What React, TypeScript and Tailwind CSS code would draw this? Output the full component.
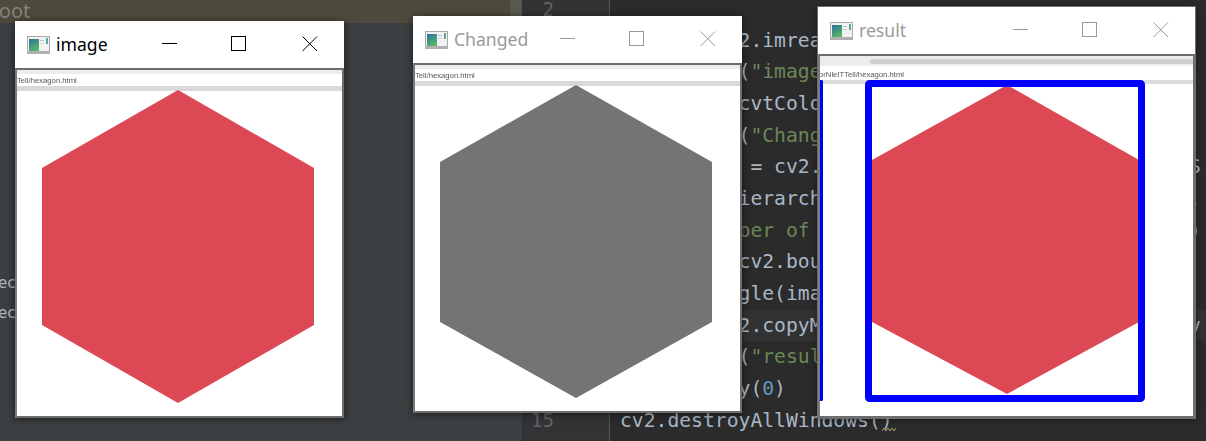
const code: { n: number; parts: [string, string][]; active?: boolean }[] = [
  { n: 2, parts: [] },
  { n: 3, parts: [['t', 'image = cv2.imread('], ['s', '"hexagon.png"'], ['t', ')']] },
  { n: 4, parts: [['t', 'cv2.imshow('], ['s', '"image"'], ['t', ', image)']] },
  { n: 5, parts: [['t', 'gry = cv2.cvtColor(image, cv2.COLOR_BGR2GRAY)']] },
  { n: 6, parts: [['t', 'cv2.imshow('], ['s', '"Changed"'], ['t', ', gry)']] },
  { n: 7, parts: [['t', 'contour, _ = cv2.findContours(gray2, cv2.RETR_LIS']] },
  { n: 8, parts: [['t', 'contour, hierarchy = cv2.findContours(gray2, cv2.']] },
  { n: 9, parts: [['t', 'print('], ['s', '"Number of contours = "'], ['t', ' + str(len(contour))']] },
  { n: 10, parts: [['t', 'x,y,w,h = cv2.boundingRect(contour[0])']] },
  { n: 11, parts: [['t', 'cv2.rectangle(image, (x, y), (x+w, y+h))']] },
  { n: 12, parts: [['t', 'image = cv2.copyMakeBorder(image, 10, 0, 0, 0, cv']], active: true },
  { n: 13, parts: [['t', 'cv2.imshow('], ['s', '"result"'], ['t', ', image)']] },
  { n: 14, parts: [['t', 'cv2.waitKey('], ['n', '0'], ['t', ')']] },
  { n: 15, parts: [['t', 'cv2.destroyAllWindows()']] },
];

function WindowIcon() {
  return (
    <svg width="23" height="18" viewBox="0 0 23 18" className="shrink-0">
      <defs>
        <linearGradient id="ico" x1="0" y1="0" x2="0.5" y2="1">
          <stop offset="0" stopColor="#2f6f9f" />
          <stop offset="1" stopColor="#55b56a" />
        </linearGradient>
      </defs>
      <rect x="0.5" y="0.5" width="22" height="17" fill="#f2f2f2" stroke="#a9a9a9" />
      <rect x="2" y="3" width="10" height="12" fill="url(#ico)" />
      <rect x="13" y="4" width="4" height="1" fill="#b5c4c4" />
      <rect x="13" y="7" width="4" height="1" fill="#c8d2d2" />
      <rect x="19" y="2" width="2" height="6" fill="#5fa59a" />
      <rect x="0" y="15" width="23" height="3" fill="#b0b0b0" />
    </svg>
  );
}

function WindowControls({ color }: { color: string }) {
  return (
    <svg width="156" height="16" viewBox="0 0 156 16" className="shrink-0 mb-[2px]" fill="none" stroke={color}>
      <path d="M0 7.5h15" />
      <rect x="69.5" y="0.5" width="14" height="14" />
      <path d="M140.5 0.5l14.5 14.5M155 0.5l-14.5 14.5" />
    </svg>
  );
}

function Window({
  className,
  title,
  active,
  address,
  controlsGap,
  children,
}: {
  className: string;
  title: string;
  active?: boolean;
  address: React.ReactNode;
  controlsGap: string;
  children: React.ReactNode;
}) {
  return (
    <div className={`absolute flex flex-col bg-white shadow-[0_1px_8px_rgba(0,0,0,0.55)] ${className}`}>
      <div className="flex items-center h-[47px] shrink-0 pl-[12px] bg-white">
        <WindowIcon />
        <span
          className={`ml-[6px] text-[17.6px] font-['Noto_Sans',sans-serif] leading-none ${active ? 'text-black' : 'text-[#9a9a9a]'}`}
        >
          {title}
        </span>
        <div className={controlsGap}></div>
        <WindowControls color={active ? '#000000' : '#999999'} />
      </div>
      <div className="relative flex-1 flex flex-col border-2 border-[#6e6e6e] border-l-[#7a7a7a] overflow-hidden bg-white">
        {address}
        {children}
      </div>
    </div>
  );
}

function BrowserChrome({ text }: { text: string }) {
  return (
    <div className="shrink-0">
      <div className="h-[4px] bg-[#ececec]"></div>
      <div className="h-[12px] bg-white flex items-center pt-[2px]">
        <span className="text-[7.7px] leading-none text-[#555] font-['Liberation_Sans',sans-serif] blur-[0.3px]">{text}</span>
      </div>
      <div className="h-[5px] bg-[#d9d9d9]"></div>
    </div>
  );
}

export default function App() {
  return (
    <div className="relative w-[1206px] h-[441px] overflow-hidden flex bg-[#2b2b2b]">
      {/* project panel */}
      <div className="w-[522px] shrink-0 flex flex-col bg-[#3c3f41] overflow-hidden">
        <div className="h-[23px] shrink-0 flex bg-[#4e4a3d]">
          <div className="w-[510px] overflow-hidden">
            <span className="block -ml-[9px] text-[20px] leading-[22px] text-[#85837a] font-['Noto_Sans',sans-serif]">root</span>
          </div>
          <div className="flex-1 bg-[#5a574e]"></div>
        </div>
        <div className="pt-[248px] flex flex-col gap-[8px] -ml-[9px] text-[17px] leading-[22px] text-[#a9b7c6] font-['Noto_Sans',sans-serif]">
          <span>rec</span>
          <span>rec</span>
        </div>
      </div>

      {/* editor */}
      <div className="flex-1 overflow-hidden">
        <div className="-mt-[7px] flex flex-col font-['DejaVu_Sans_Mono',monospace] text-[19.7px] whitespace-pre">
          {code.map(line => (
            <div key={line.n} className="flex h-[31.67px] shrink-0">
              <div className="w-[88px] shrink-0 bg-[#313335] border-r border-[#555555] flex items-center justify-end pr-[55px] text-[#606366] text-[19px]">
                {line.n}
              </div>
              <div className={`flex-1 flex items-center pl-[10px] ${line.active ? 'bg-[#323232]' : ''}`}>
                {line.parts.map(([kind, text], i) => (
                  <span
                    key={i}
                    className={kind === 's' ? 'text-[#6a8759]' : kind === 'n' ? 'text-[#6897bb]' : 'text-[#a9b7c6]'}
                  >
                    {text}
                  </span>
                ))}
              </div>
            </div>
          ))}
          <div className="h-[40px] flex shrink-0">
            <div className="w-[88px] bg-[#313335] border-r border-[#555555]"></div>
          </div>
        </div>
      </div>

      {/* squiggle under the closing paren */}
      <svg width="14" height="6" viewBox="0 0 14 6" className="absolute left-[882px] top-[427px]" fill="none" stroke="#a89f6a">
        <path d="M0 4l2-3 2 3 2-3 2 3 2-3 2 3 2-3" />
      </svg>

      <Window
        className="left-[15px] top-[21px] w-[329px] h-[397px]"
        title="image"
        active
        controlsGap="ml-[54px]"
        address={<BrowserChrome text="Tell/hexagon.html" />}
      >
        <svg className="absolute left-0 top-0" width="325" height="348" viewBox="17 70 325 348">
          <polygon points="178,90 314,168 314,325 178,403 42,325 42,168" fill="#dc4955" />
        </svg>
      </Window>

      <Window
        className="left-[413px] top-[16px] w-[329px] h-[397px]"
        title="Changed"
        controlsGap="ml-[32px]"
        address={<BrowserChrome text="Tell/hexagon.html" />}
      >
        <svg className="absolute left-0 top-0" width="325" height="348" viewBox="415 65 325 348">
          <polygon points="576,85 712,162 712,322 576,398 440,322 440,162" fill="#747474" />
        </svg>
      </Window>

      <Window
        className="left-[818px] top-[7px] w-[377px] h-[411px] outline outline-[#6e6e6e]"
        title="result"
        controlsGap="ml-[107px]"
        address={
          <div className="shrink-0">
            <div className="h-[10px] bg-[#ececec] flex items-center pl-[50px]">
              <div className="h-[5px] flex-1 rounded-l-full bg-[#cfcfcf]"></div>
            </div>
            <div className="h-[14px] bg-white flex items-center pt-[4px]">
              <span className="-ml-[1px] text-[7.7px] leading-none text-[#555] font-['Liberation_Sans',sans-serif] blur-[0.3px]">orNleITTell/hexagon.html</span>
            </div>
            <div className="h-[4px] bg-[#dcdcdc]"></div>
          </div>
        }
      >
        <svg className="absolute left-0 top-0" width="373" height="362" viewBox="820 56 373 362">
          <polygon points="1007,85 1139,160 1139,322 1007,394 872,322 872,160" fill="#dc4955" />
          <rect x="868.5" y="83.5" width="273" height="315" rx="1" fill="none" stroke="#0000ff" strokeWidth="7" strokeLinejoin="round" />
          <rect x="818" y="80" width="5" height="321" rx="1.5" fill="#0000ff" />
        </svg>
      </Window>
    </div>
  );
}
